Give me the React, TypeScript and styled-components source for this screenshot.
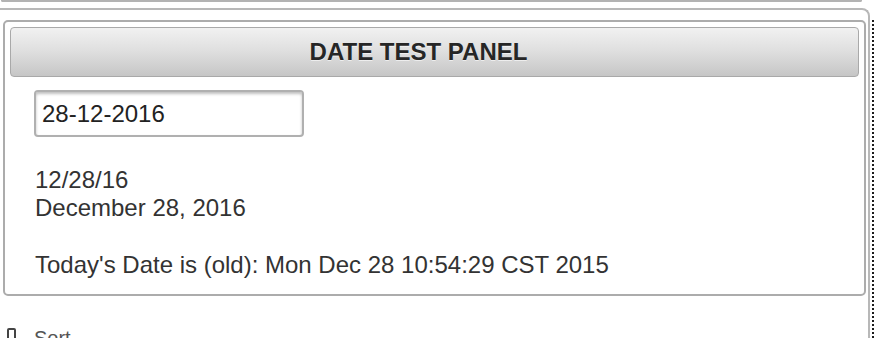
import styled, { createGlobalStyle } from "styled-components";

const GlobalStyle = createGlobalStyle`
  html, body {
    margin: 0;
    padding: 0;
    background: #ffffff;
    overflow: hidden;
  }
  body {
    font-family: "Liberation Sans", Arial, Helvetica, sans-serif;
    color: #333333;
    height: 338px;
  }
`;

// Layout
const Page = styled.div`
  display: flex;
  height: 338px;
`;

const MainColumn = styled.div`
  width: 870px;
  display: flex;
  flex-direction: column;
`;

const SideStrip = styled.div`
  flex: 1;
  margin-left: 2px;
  margin-top: 20px;
  border-left: 2px dotted #1c1c1c;
`;

// The panel above, only its bottom edge shows
const PrevPanel = styled.div`
  height: 0;
  margin-right: 8px;
  margin-left: 1px;
  border: 2px solid #b3b3b3;
  border-top: none;
  border-radius: 0 0 6px 6px;
`;

const Container = styled.div`
  margin-top: 6px;
  flex: 1;
  border-top: 2px solid #b8b8b8;
  border-right: 2px solid #b8b8b8;
  border-top-right-radius: 8px;
  padding: 10px 2px 0 3px;
`;

// Panel
const Panel = styled.section`
  border: 2px solid #acacac;
  border-radius: 5px;
  padding: 5px 5px 15px 5px;
`;

const PanelHeader = styled.header`
  height: 48px;
  display: flex;
  align-items: center;
  justify-content: center;
  padding-right: 32px;
  border: 1px solid #a9a9a9;
  border-radius: 4px;
  background: linear-gradient(to bottom, #f1f1f1 0%, #dedede 50%, #c6c6c6 100%);
`;

const PanelTitle = styled.h2`
  margin: 0;
  font-size: 24px;
  font-weight: 700;
  color: #262626;
  text-shadow: 0 1px 0 rgba(255, 255, 255, 0.6);
`;

const PanelBody = styled.div`
  padding: 13px 0 0 24px;
  display: flex;
  flex-direction: column;
`;

const DateInput = styled.input`
  box-sizing: border-box;
  width: 270px;
  height: 47px;
  padding: 0 6px;
  border: 2px solid #b0b0b0;
  border-radius: 4px;
  box-shadow: inset 0 2px 3px rgba(0, 0, 0, 0.25);
  font-family: "Liberation Sans", Arial, sans-serif;
  font-size: 24px;
  color: #222222;
  outline: none;
`;

const DateLines = styled.div<{ $gap: number }>`
  margin-top: ${(p) => p.$gap}px;
  padding-left: 1px;
  font-size: 24px;
  line-height: 28px;
  color: #333333;
`;

// Next item below the panel, cut off by the window
const NextRow = styled.div`
  margin-top: 32px;
  display: flex;
  align-items: flex-start;
  gap: 18px;
  padding-left: 4px;
  height: 14px;
  overflow: hidden;
`;

const Box = styled.span`
  width: 9px;
  height: 14px;
  border: 2px solid #444;
  border-radius: 2px;
  box-sizing: border-box;
`;

const NextLabel = styled.span`
  font-size: 20px;
  line-height: 20px;
  color: #555;
`;

export default function App() {
  return (
    <>
      <GlobalStyle />
      <Page>
        <MainColumn>
          <PrevPanel />
          <Container>
            <Panel>
              <PanelHeader>
                <PanelTitle>DATE TEST PANEL</PanelTitle>
              </PanelHeader>
              <PanelBody>
                <DateInput defaultValue="28-12-2016" />
                <DateLines $gap={29}>
                  12/28/16
                  <br />
                  December 28, 2016
                </DateLines>
                <DateLines $gap={29}>
                  Today's Date is (old): Mon Dec 28 10:54:29 CST 2015
                </DateLines>
              </PanelBody>
            </Panel>
            <NextRow>
              <Box />
              <NextLabel>Sort</NextLabel>
            </NextRow>
          </Container>
        </MainColumn>
        <SideStrip />
      </Page>
    </>
  );
}
